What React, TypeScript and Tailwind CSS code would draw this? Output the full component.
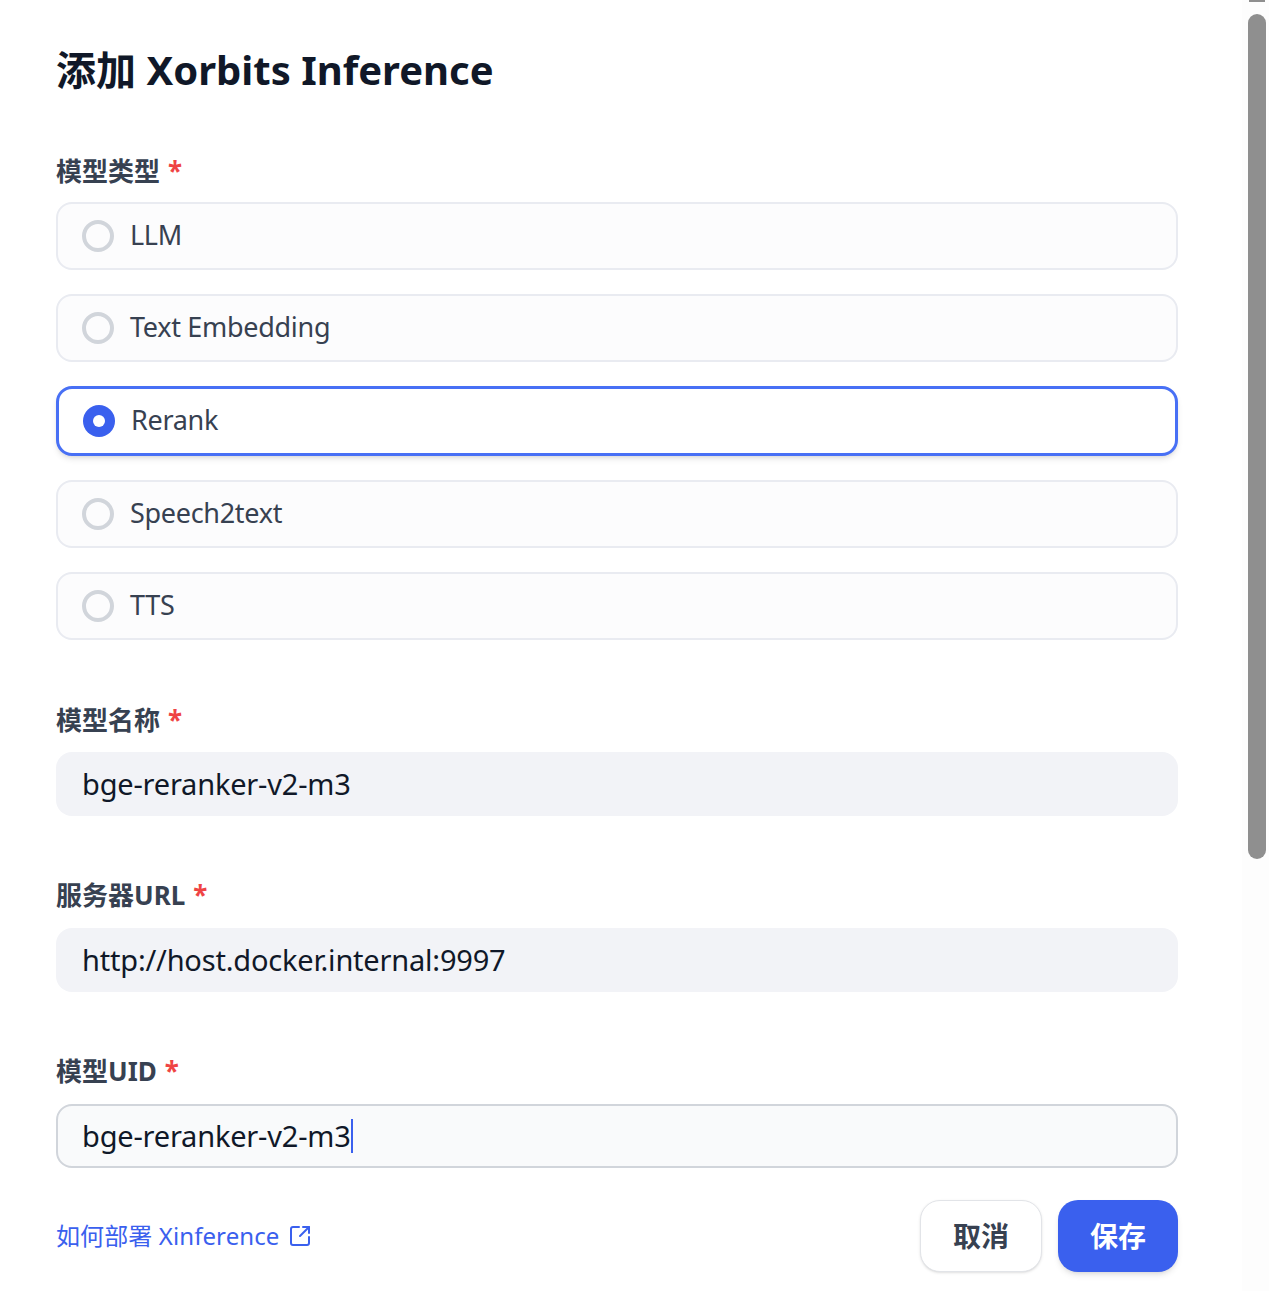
import { SquareArrowOutUpRight } from 'lucide-react';

const FONT = "font-['Noto_Sans','Noto_Sans_CJK_SC',sans-serif]";

const MODEL_TYPES = ['LLM', 'Text Embedding', 'Rerank', 'Speech2text', 'TTS'];
const SELECTED = 'Rerank';

function FieldLabel({ text }: { text: string }) {
  return (
    <div className="flex h-[28px] items-center text-[26px] font-bold leading-[28px] text-[#374151]">
      {text}
      <span className="ml-[8px] text-[26px] text-[#ef4444]">*</span>
    </div>
  );
}

function ModelTypeOption({ label, selected }: { label: string; selected: boolean }) {
  if (selected) {
    return (
      <div className="flex h-[70px] items-center rounded-[16px] border-[3px] border-[#4870f5] bg-white pl-[24px] shadow-md">
        <span className="flex h-[32px] w-[32px] items-center justify-center rounded-full bg-[#3a60ee]">
          <span className="h-[12px] w-[12px] rounded-full bg-white" />
        </span>
        <span className="ml-[16px] pb-[2px] text-[27px] tracking-[-0.3px] text-[#374151]">{label}</span>
      </div>
    );
  }
  return (
    <div className="flex h-[68px] items-center rounded-[16px] border-2 border-[#e9ebf1] bg-[#fcfcfd] pl-[24px]">
      <span className="h-[32px] w-[32px] rounded-full border-[4px] border-[#d1d5db] bg-[#fcfcfd]" />
      <span className="ml-[16px] pb-[2px] text-[27px] tracking-[-0.3px] text-[#374151]">{label}</span>
    </div>
  );
}

export default function App() {
  return (
    <div className={`flex h-[1291px] w-[1269px] overflow-hidden bg-white ${FONT}`}>
      <main className="w-[1242px] pl-[56px] pr-[64px] pt-[44px]">
        <h1 className="h-[52px] text-[40px] font-bold leading-[52px] text-[#101828]">添加 Xorbits Inference</h1>

        <div className="mt-[61px]">
          <FieldLabel text="模型类型" />
          <div className="mt-[17px] flex flex-col gap-[24px]">
            {MODEL_TYPES.map((type) => (
              <ModelTypeOption key={type} label={type} selected={type === SELECTED} />
            ))}
          </div>
        </div>

        <div className="mt-[66px]">
          <FieldLabel text="模型名称" />
          <div className="mt-[18px] flex h-[64px] items-center rounded-[16px] bg-[#f2f3f7] pl-[26px] text-[29px] tracking-[-0.2px] text-[#101828]">
            bge-reranker-v2-m3
          </div>
        </div>

        <div className="mt-[65px]">
          <FieldLabel text="服务器URL" />
          <div className="mt-[19px] flex h-[64px] items-center rounded-[16px] bg-[#f2f3f7] pl-[26px] text-[29px] tracking-[-0.2px] text-[#101828]">
            http://host.docker.internal:9997
          </div>
        </div>

        <div className="mt-[65px]">
          <FieldLabel text="模型UID" />
          <div className="mt-[19px] flex h-[64px] items-center rounded-[16px] border-2 border-[#d1d5db] bg-[#f9fafb] pl-[24px] text-[29px] tracking-[-0.2px] text-[#101828]">
            bge-reranker-v2-m3
            <span className="h-[34px] w-[2px] bg-[#3a60ee]" />
          </div>
        </div>

        <div className="mt-[32px] flex items-center justify-between">
          <a className="flex items-center text-[24px] tracking-[0.1px] text-[#3a60ee]">
            如何部署 Xinference
            <SquareArrowOutUpRight className="ml-[9px] h-[24px] w-[24px]" strokeWidth={2} />
          </a>
          <div className="flex gap-[16px]">
            <button className="h-[72px] w-[122px] rounded-[20px] border-[1.5px] border-[#e2e4e8] bg-white text-[28px] font-bold text-[#374151] shadow-sm">
              取消
            </button>
            <button className="h-[72px] w-[120px] rounded-[20px] bg-[#3a60ee] text-[28px] font-bold text-white shadow-md">
              保存
            </button>
          </div>
        </div>
      </main>

      <aside className="relative w-[27px] bg-[#fdfdfd]">
        <div className="absolute left-[7px] top-0 h-[2px] w-[16px] bg-[#8f8f8f]" />
        <div className="absolute left-[6px] top-[14px] h-[845px] w-[18px] rounded-full bg-[#8f8f8f]" />
      </aside>
    </div>
  );
}
